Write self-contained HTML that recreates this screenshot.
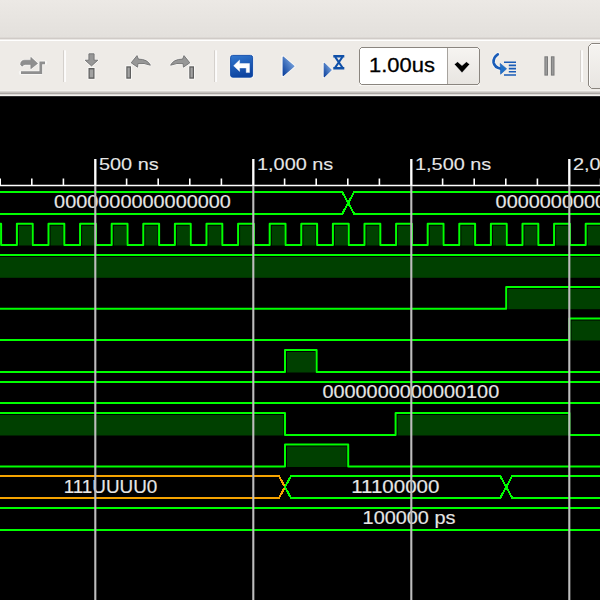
<!DOCTYPE html>
<html><head><meta charset="utf-8"><style>
html,body{margin:0;padding:0;width:600px;height:600px;overflow:hidden;background:#000}
svg{display:block}
</style></head><body>
<svg width="600" height="600" viewBox="0 0 600 600">
<defs><linearGradient id="topg" x1="0" y1="0" x2="0" y2="1"><stop offset="0" stop-color="#ece9e5"/><stop offset="1" stop-color="#e3e0dc"/></linearGradient><linearGradient id="bluesq" x1="0" y1="0" x2="0.3" y2="1"><stop offset="0" stop-color="#3479d0"/><stop offset="1" stop-color="#0d44a0"/></linearGradient><linearGradient id="playg" x1="1" y1="0" x2="0" y2="1"><stop offset="0" stop-color="#8ab4e8"/><stop offset="1" stop-color="#0b3f9c"/></linearGradient><linearGradient id="btng" x1="0" y1="0" x2="0" y2="1"><stop offset="0" stop-color="#f6f4f1"/><stop offset="1" stop-color="#e8e5e1"/></linearGradient></defs>
<rect x="0" y="0" width="600" height="37" fill="url(#topg)"/>
<rect x="0" y="37" width="600" height="1" fill="#dcd8d4"/>
<rect x="0" y="38" width="600" height="1" fill="#d0cbc7"/>
<rect x="0" y="39" width="600" height="1" fill="#ebe8e5"/>
<rect x="0" y="40" width="600" height="1" fill="#ffffff"/>
<rect x="0" y="41" width="600" height="50" fill="#eeebe7"/>
<rect x="0" y="90" width="600" height="1" fill="#f1efeb"/>
<rect x="0" y="91" width="600" height="1" fill="#d8d5d1"/>
<rect x="0" y="92" width="600" height="1" fill="#c4c0bc"/>
<rect x="0" y="93" width="600" height="1" fill="#aaa6a2"/>
<rect x="0" y="94" width="600" height="1" fill="#dedbd7"/>
<rect x="0" y="95" width="600" height="1" fill="#f3f1ee"/>
<rect x="0" y="96" width="600" height="1" fill="#2c2c2c"/>
<rect x="63" y="50.3" width="1" height="31.7" fill="#d4d0cc"/><rect x="64.3" y="50.3" width="1.5" height="31.7" fill="#ffffff"/>
<rect x="214" y="50.3" width="1" height="31.7" fill="#d4d0cc"/><rect x="215.3" y="50.3" width="1.5" height="31.7" fill="#ffffff"/>
<rect x="580" y="50.3" width="1" height="31.7" fill="#d4d0cc"/><rect x="581.3" y="50.3" width="1.5" height="31.7" fill="#ffffff"/>
<g fill="none" stroke="#ffffff" stroke-opacity="0.55" stroke-linejoin="round" stroke-linecap="round"><path d="M20.6 64.8 Q20.4 60.2 24.8 60.2 L30.8 60.2 L30.8 57.3 L37.6 63.4 L30.8 68.8 L30.8 64.4 L25.2 64.4 Q23.6 64.4 23.1 65.6 Q22 67 20.6 64.8 Z" stroke-width="2" fill="#fff"/><path d="M21 72.7 H40.8 V62.8 H45" stroke-width="4.6"/></g>
<path d="M20.6 64.8 Q20.4 60.2 24.8 60.2 L30.8 60.2 L30.8 57.3 L37.6 63.4 L30.8 68.8 L30.8 64.4 L25.2 64.4 Q23.6 64.4 23.1 65.6 Q22 67 20.6 64.8 Z" fill="#8f8f8f" stroke="#767676" stroke-width="0.5"/>
<path d="M21 72.7 H40.8 V62.8 H45" stroke="#8f8f8f" stroke-width="2.7" fill="none"/>
<g fill="none" stroke="#ffffff" stroke-opacity="0.6" stroke-linejoin="round" stroke-linecap="round"><path d="M88.9 53.8 H94.1 V60.2 H97.8 L91.5 65.9 L85.2 60.2 H88.9 Z" stroke-width="2.2" fill="#fff"/><rect x="88.5" y="68" width="6" height="10.8" stroke-width="2"/></g>
<path d="M88.9 53.8 H94.1 V60.2 H97.8 L91.5 65.9 L85.2 60.2 H88.9 Z" fill="#979797" stroke="#6f6f6f" stroke-width="0.9" stroke-linejoin="round"/>
<rect x="88.5" y="68" width="6" height="10.8" fill="#5e5e5e"/><rect x="89.7" y="69.4" width="3.6" height="8" fill="#a2a2a2"/>
<g fill="none" stroke="#ffffff" stroke-opacity="0.6" stroke-linejoin="round" stroke-linecap="round"><rect x="126.3" y="66.3" width="4.7" height="12.4" stroke-width="2"/><path d="M137 55.6 L131.2 62.8 L137.6 67.2 L137.9 63.6 Q144 62.6 150.4 65.2 Q147.5 59.1 138.4 59.1 Z" stroke-width="2.2" fill="#fff"/></g>
<rect x="126.3" y="66.3" width="4.7" height="12.4" fill="#5e5e5e"/><rect x="127.5" y="67.6" width="2.3" height="9.8" fill="#a2a2a2"/>
<path d="M137 55.6 L131.2 62.8 L137.6 67.2 L137.9 63.6 Q144 62.6 150.4 65.2 Q147.5 59.1 138.4 59.1 Z" fill="#979797" stroke="#6f6f6f" stroke-width="0.9" stroke-linejoin="round"/>
<g fill="none" stroke="#ffffff" stroke-opacity="0.6" stroke-linejoin="round" stroke-linecap="round"><rect x="189.3" y="66.3" width="4.7" height="12.4" stroke-width="2"/><path d="M184 55.6 L189.8 62.8 L183.4 67.2 L183.1 63.6 Q177 62.6 170.6 65.2 Q173.5 59.1 182.6 59.1 Z" stroke-width="2.2" fill="#fff"/></g>
<rect x="189.3" y="66.3" width="4.7" height="12.4" fill="#5e5e5e"/><rect x="190.5" y="67.6" width="2.3" height="9.8" fill="#a2a2a2"/>
<path d="M184 55.6 L189.8 62.8 L183.4 67.2 L183.1 63.6 Q177 62.6 170.6 65.2 Q173.5 59.1 182.6 59.1 Z" fill="#979797" stroke="#6f6f6f" stroke-width="0.9" stroke-linejoin="round"/>
<rect x="229.8" y="54.8" width="24" height="23.4" rx="3" fill="#fff" fill-opacity="0.8"/>
<rect x="230.6" y="55.4" width="22" height="21.8" rx="2" fill="url(#bluesq)" stroke="#0b46a6" stroke-width="0.9"/>
<path d="M233.6 65.8 L239.6 60 V63.5 H249.5 V72.6 H246.2 V68 H239.6 V71.4 Z" fill="#fff" stroke="#fff" stroke-width="0.4" stroke-linejoin="round"/>
<path d="M282.5 56.4 L294.5 66.3 L282.5 76 Z" fill="#fff" fill-opacity="0.6" stroke="#fff" stroke-opacity="0.6" stroke-width="2.4" stroke-linejoin="round"/>
<path d="M283.3 57.2 L293.8 66.3 L283.3 75.2 Z" fill="url(#playg)" stroke="url(#playg)" stroke-width="1.4" stroke-linejoin="round"/>
<path d="M323.7 62.7 L331.7 70 L323.7 77.3 Z" fill="#fff" fill-opacity="0.6" stroke="#fff" stroke-opacity="0.6" stroke-width="2.2" stroke-linejoin="round"/>
<path d="M324.3 63.4 L331.1 70 L324.3 76.6 Z" fill="url(#playg)" stroke="url(#playg)" stroke-width="1.2" stroke-linejoin="round"/>
<path d="M333.3 56.2 H344.3 M333.3 68.3 H344.3" stroke="#1050a8" stroke-width="2.4"/>
<path d="M335.2 57 L342.4 67.5 M342.4 57 L335.2 67.5" stroke="#1050a8" stroke-width="2.2" fill="none"/>
<path d="M361.5 47.5 H477.5 L479.5 49.5 V82.5 L477.5 84.5 H361.5 L359.5 82.5 V49.5 Z" fill="#fff" stroke="#8a857f" stroke-width="1"/>
<rect x="448" y="48" width="31" height="36" fill="url(#btng)"/>
<path d="M448 48 H477.3 L479 49.7" stroke="#fdfcfb" stroke-width="1" fill="none"/>
<path d="M477.5 47.5 L479.5 49.5 V82.5 L477.5 84.5 H448" stroke="#8a857f" stroke-width="1" fill="none"/>
<path d="M361.5 47.5 H477.5" stroke="#8a857f" stroke-width="1"/>
<rect x="447" y="48" width="1" height="36" fill="#a7a39e"/>
<rect x="359" y="85" width="121" height="1" fill="#f8f6f3"/>
<text transform="translate(369 72.3) scale(1.045 1)" font-family="Liberation Sans, sans-serif" font-size="21" stroke="#000" stroke-width="0.3" fill="#000">1.00us</text>
<path d="M454.3 64.3 L457.6 61.8 L462 65.6 L466.4 61.8 L469.7 64.3 L462 72.8 Z" fill="#000" stroke="#fff" stroke-opacity="0.6" stroke-width="0.8"/>
<path d="M497.8 54.3 Q493 57.5 493.6 62.5 Q494.5 67.5 501 68.8" stroke="#fff" stroke-opacity="0.5" stroke-width="4.4" fill="none" stroke-linecap="round"/>
<path d="M497.8 54.3 Q493 57.5 493.6 62.5 Q494.5 67.5 501 68.8" stroke="#1a5cb8" stroke-width="2.7" fill="none" stroke-linecap="round"/>
<path d="M500.2 63.4 L506.6 68.8 L500.6 74.2 Z" fill="#2272c8" stroke="#1a5cb8" stroke-width="0.6" stroke-linejoin="round"/>
<g stroke="#1a5cb8" stroke-width="1.6"><path d="M504 62.3 H516 M508.8 65.4 H516 M508.8 68.6 H516 M508.8 71.7 H516 M504 75 H516"/></g>
<rect x="544.4" y="56.3" width="3.6" height="19.3" fill="#7a7a7a"/><rect x="545.4" y="57.3" width="1.6" height="17.3" fill="#9a9a9a"/>
<rect x="550.9" y="56.3" width="3.6" height="19.3" fill="#7a7a7a"/><rect x="551.9" y="57.3" width="1.6" height="17.3" fill="#9a9a9a"/>
<path d="M591.5 43.5 H620 V88.5 H591.5 L588.5 85.5 V46.5 Z" fill="url(#btng)" stroke="#8a857f" stroke-width="1"/>
<path d="M591.8 44.5 H600 M589.5 47 V85" stroke="#fdfcfb" stroke-width="1"/>
<rect x="0" y="97" width="600" height="503" fill="#000"/>
<text transform="translate(99.00 170.10) scale(1.170 1)" text-anchor="start" fill="#e6e6e6" stroke="#e6e6e6" stroke-width="0.10" font-family="Liberation Sans, sans-serif" font-size="17">500 ns</text>
<text transform="translate(257.00 170.10) scale(1.170 1)" text-anchor="start" fill="#e6e6e6" stroke="#e6e6e6" stroke-width="0.10" font-family="Liberation Sans, sans-serif" font-size="17">1,000 ns</text>
<text transform="translate(415.00 170.10) scale(1.170 1)" text-anchor="start" fill="#e6e6e6" stroke="#e6e6e6" stroke-width="0.10" font-family="Liberation Sans, sans-serif" font-size="17">1,500 ns</text>
<text transform="translate(573.00 170.10) scale(1.170 1)" text-anchor="start" fill="#e6e6e6" stroke="#e6e6e6" stroke-width="0.10" font-family="Liberation Sans, sans-serif" font-size="17">2,000 ns</text>
<g stroke="#fff" stroke-width="1.6" fill="none">
<line x1="0" y1="185.5" x2="600" y2="185.5"/>
<line x1="0.20" y1="178.5" x2="0.20" y2="185.5"/>
<line x1="31.80" y1="178.5" x2="31.80" y2="185.5"/>
<line x1="63.40" y1="178.5" x2="63.40" y2="185.5"/>
<line x1="126.60" y1="178.5" x2="126.60" y2="185.5"/>
<line x1="158.20" y1="178.5" x2="158.20" y2="185.5"/>
<line x1="189.80" y1="178.5" x2="189.80" y2="185.5"/>
<line x1="221.40" y1="178.5" x2="221.40" y2="185.5"/>
<line x1="284.60" y1="178.5" x2="284.60" y2="185.5"/>
<line x1="316.20" y1="178.5" x2="316.20" y2="185.5"/>
<line x1="347.80" y1="178.5" x2="347.80" y2="185.5"/>
<line x1="379.40" y1="178.5" x2="379.40" y2="185.5"/>
<line x1="442.60" y1="178.5" x2="442.60" y2="185.5"/>
<line x1="474.20" y1="178.5" x2="474.20" y2="185.5"/>
<line x1="505.80" y1="178.5" x2="505.80" y2="185.5"/>
<line x1="537.40" y1="178.5" x2="537.40" y2="185.5"/>
<line x1="600.60" y1="178.5" x2="600.60" y2="185.5"/>
</g>
<path d="M-5.00 192.00 L342.20 192.00 L348.20 203.00 L342.20 214.00 L-5.00 214.00" stroke="#00ff00" stroke-width="2" fill="none" shape-rendering="crispEdges"/>
<path d="M348.20 203.00 L354.20 192.00 L605.00 192.00 M605.00 214.00 L354.20 214.00 L348.20 203.00" stroke="#00ff00" stroke-width="2" fill="none" shape-rendering="crispEdges"/>
<text transform="translate(142.50 208.00) scale(1.105 1)" text-anchor="middle" fill="#e6e6e6" stroke="#e6e6e6" stroke-width="0.15" font-family="Liberation Sans, sans-serif" font-size="18">0000000000000000</text>
<text transform="translate(584.00 208.00) scale(1.105 1)" text-anchor="middle" fill="#e6e6e6" stroke="#e6e6e6" stroke-width="0.15" font-family="Liberation Sans, sans-serif" font-size="18">0000000000000000</text>
<rect x="-3.00" y="225.80" width="2.60" height="19.70" fill="#004000"/>
<rect x="18.90" y="225.80" width="12.30" height="19.70" fill="#004000"/>
<rect x="50.50" y="225.80" width="12.30" height="19.70" fill="#004000"/>
<rect x="82.10" y="225.80" width="12.30" height="19.70" fill="#004000"/>
<rect x="113.70" y="225.80" width="12.30" height="19.70" fill="#004000"/>
<rect x="145.30" y="225.80" width="12.30" height="19.70" fill="#004000"/>
<rect x="176.90" y="225.80" width="12.30" height="19.70" fill="#004000"/>
<rect x="208.50" y="225.80" width="12.30" height="19.70" fill="#004000"/>
<rect x="240.10" y="225.80" width="12.30" height="19.70" fill="#004000"/>
<rect x="271.70" y="225.80" width="12.30" height="19.70" fill="#004000"/>
<rect x="303.30" y="225.80" width="12.30" height="19.70" fill="#004000"/>
<rect x="334.90" y="225.80" width="12.30" height="19.70" fill="#004000"/>
<rect x="366.50" y="225.80" width="12.30" height="19.70" fill="#004000"/>
<rect x="398.10" y="225.80" width="12.30" height="19.70" fill="#004000"/>
<rect x="429.70" y="225.80" width="12.30" height="19.70" fill="#004000"/>
<rect x="461.30" y="225.80" width="12.30" height="19.70" fill="#004000"/>
<rect x="492.90" y="225.80" width="12.30" height="19.70" fill="#004000"/>
<rect x="524.50" y="225.80" width="12.30" height="19.70" fill="#004000"/>
<rect x="556.10" y="225.80" width="12.30" height="19.70" fill="#004000"/>
<rect x="587.70" y="225.80" width="15.80" height="19.70" fill="#004000"/>
<path d="M-5.00 223.80 L1.10 223.80 L1.10 245.00 L16.90 245.00 L16.90 223.80 L32.70 223.80 L32.70 245.00 L48.50 245.00 L48.50 223.80 L64.30 223.80 L64.30 245.00 L80.10 245.00 L80.10 223.80 L95.90 223.80 L95.90 245.00 L111.70 245.00 L111.70 223.80 L127.50 223.80 L127.50 245.00 L143.30 245.00 L143.30 223.80 L159.10 223.80 L159.10 245.00 L174.90 245.00 L174.90 223.80 L190.70 223.80 L190.70 245.00 L206.50 245.00 L206.50 223.80 L222.30 223.80 L222.30 245.00 L238.10 245.00 L238.10 223.80 L253.90 223.80 L253.90 245.00 L269.70 245.00 L269.70 223.80 L285.50 223.80 L285.50 245.00 L301.30 245.00 L301.30 223.80 L317.10 223.80 L317.10 245.00 L332.90 245.00 L332.90 223.80 L348.70 223.80 L348.70 245.00 L364.50 245.00 L364.50 223.80 L380.30 223.80 L380.30 245.00 L396.10 245.00 L396.10 223.80 L411.90 223.80 L411.90 245.00 L427.70 245.00 L427.70 223.80 L443.50 223.80 L443.50 245.00 L459.30 245.00 L459.30 223.80 L475.10 223.80 L475.10 245.00 L490.90 245.00 L490.90 223.80 L506.70 223.80 L506.70 245.00 L522.50 245.00 L522.50 223.80 L538.30 223.80 L538.30 245.00 L554.10 245.00 L554.10 223.80 L569.90 223.80 L569.90 245.00 L585.70 245.00 L585.70 223.80 L605.00 223.80" stroke="#00ff00" stroke-width="2" fill="none" stroke-linejoin="round"/>
<rect x="-3.00" y="257.00" width="607.00" height="20.80" fill="#004000"/>
<line x1="-5.00" y1="255.00" x2="605.00" y2="255.00" stroke="#00ff00" stroke-width="2"/>
<rect x="508.20" y="289.00" width="95.30" height="20.20" fill="#004000"/>
<path d="M-5.00 308.70 L506.20 308.70 L506.20 287.00 L605.00 287.00" stroke="#00ff00" stroke-width="2" fill="none" stroke-linejoin="round"/>
<rect x="571.40" y="320.50" width="32.10" height="20.00" fill="#004000"/>
<path d="M-5.00 340.00 L569.40 340.00 L569.40 318.50 L605.00 318.50" stroke="#00ff00" stroke-width="2" fill="none" stroke-linejoin="round"/>
<rect x="287.00" y="352.00" width="28.10" height="20.50" fill="#004000"/>
<path d="M-5.00 372.00 L285.00 372.00 L285.00 350.00 L316.60 350.00 L316.60 372.00 L605.00 372.00" stroke="#00ff00" stroke-width="2" fill="none" stroke-linejoin="round"/>
<path d="M-5.00 381.50 L605.00 381.50 M605.00 403.00 L-5.00 403.00" stroke="#00ff00" stroke-width="2" fill="none" shape-rendering="crispEdges"/>
<text transform="translate(410.80 397.50) scale(1.105 1)" text-anchor="middle" fill="#e6e6e6" stroke="#e6e6e6" stroke-width="0.15" font-family="Liberation Sans, sans-serif" font-size="18">0000000000000100</text>
<rect x="-3.00" y="415.00" width="286.50" height="20.50" fill="#004000"/>
<rect x="397.60" y="415.00" width="170.30" height="20.50" fill="#004000"/>
<path d="M-5.00 413.00 L285.00 413.00 L285.00 435.00 L395.60 435.00 L395.60 413.00 L569.40 413.00 L569.40 435.00 L605.00 435.00" stroke="#00ff00" stroke-width="2" fill="none" stroke-linejoin="round"/>
<rect x="287.00" y="446.50" width="59.70" height="20.50" fill="#004000"/>
<path d="M-5.00 466.50 L285.00 466.50 L285.00 444.50 L348.20 444.50 L348.20 466.50 L605.00 466.50" stroke="#00ff00" stroke-width="2" fill="none" stroke-linejoin="round"/>
<path d="M-5.00 476.00 L279.00 476.00 L285.00 487.00 L279.00 498.00 L-5.00 498.00" stroke="#f5a300" stroke-width="2" fill="none" shape-rendering="crispEdges"/>
<path d="M285.00 487.00 L291.00 476.00 L500.20 476.00 L506.20 487.00 L500.20 498.00 L291.00 498.00 L285.00 487.00" stroke="#00ff00" stroke-width="2" fill="none" shape-rendering="crispEdges"/>
<path d="M506.20 487.00 L512.20 476.00 L605.00 476.00 M605.00 498.00 L512.20 498.00 L506.20 487.00" stroke="#00ff00" stroke-width="2" fill="none" shape-rendering="crispEdges"/>
<text transform="translate(110.50 493.00) scale(1.050 1)" text-anchor="middle" fill="#e6e6e6" stroke="#e6e6e6" stroke-width="0.15" font-family="Liberation Sans, sans-serif" font-size="18">111UUUU0</text>
<text transform="translate(395.30 493.00) scale(1.140 1)" text-anchor="middle" fill="#e6e6e6" stroke="#e6e6e6" stroke-width="0.15" font-family="Liberation Sans, sans-serif" font-size="18">11100000</text>
<path d="M-5.00 508.00 L605.00 508.00 M605.00 530.00 L-5.00 530.00" stroke="#00ff00" stroke-width="2" fill="none" shape-rendering="crispEdges"/>
<text transform="translate(409.00 524.00) scale(1.105 1)" text-anchor="middle" fill="#e6e6e6" stroke="#e6e6e6" stroke-width="0.15" font-family="Liberation Sans, sans-serif" font-size="18">100000 ps</text>
<line x1="95.30" y1="159" x2="95.30" y2="600" stroke="#bdbdbd" stroke-width="2.1"/>
<line x1="253.30" y1="159" x2="253.30" y2="600" stroke="#bdbdbd" stroke-width="2.1"/>
<line x1="411.30" y1="159" x2="411.30" y2="600" stroke="#bdbdbd" stroke-width="2.1"/>
<line x1="569.30" y1="159" x2="569.30" y2="600" stroke="#bdbdbd" stroke-width="2.1"/>
<line x1="95.30" y1="159" x2="95.30" y2="186" stroke="#fff" stroke-width="2"/>
<line x1="253.30" y1="159" x2="253.30" y2="186" stroke="#fff" stroke-width="2"/>
<line x1="411.30" y1="159" x2="411.30" y2="186" stroke="#fff" stroke-width="2"/>
<line x1="569.30" y1="159" x2="569.30" y2="186" stroke="#fff" stroke-width="2"/>
</svg>
</body></html>
